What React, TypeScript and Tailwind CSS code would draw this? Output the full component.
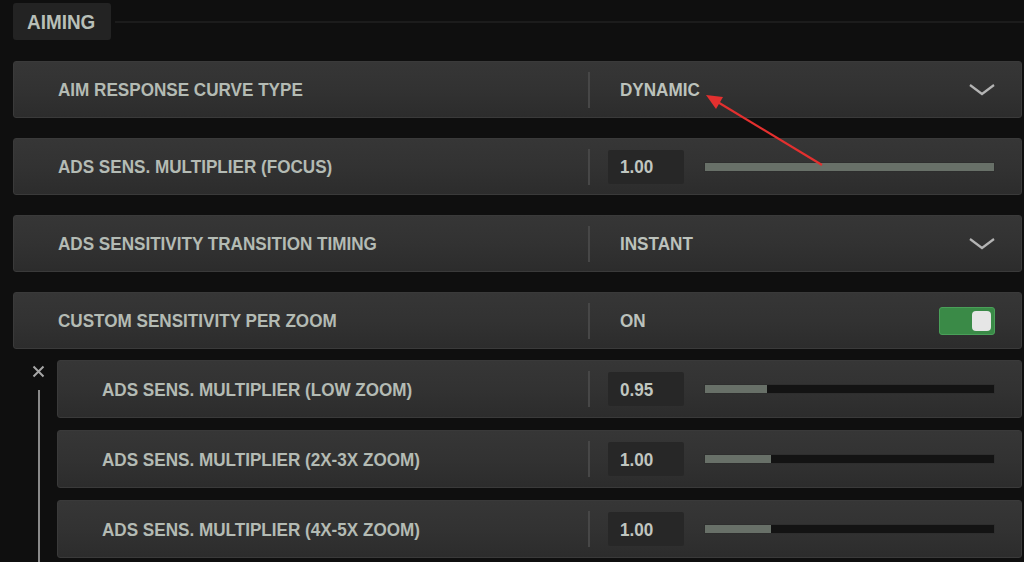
import React from "react";

type Kind = "dropdown" | "slider" | "toggle";

interface Setting {
  label: string;
  kind: Kind;
  value: string;
  fill?: number;
}

const mainRows: Setting[] = [
  { label: "AIM RESPONSE CURVE TYPE", kind: "dropdown", value: "DYNAMIC" },
  { label: "ADS SENS. MULTIPLIER (FOCUS)", kind: "slider", value: "1.00", fill: 100 },
  { label: "ADS SENSITIVITY TRANSITION TIMING", kind: "dropdown", value: "INSTANT" },
  { label: "CUSTOM SENSITIVITY PER ZOOM", kind: "toggle", value: "ON" },
];

const zoomRows: Setting[] = [
  { label: "ADS SENS. MULTIPLIER (LOW ZOOM)", kind: "slider", value: "0.95", fill: 21.5 },
  { label: "ADS SENS. MULTIPLIER (2X-3X ZOOM)", kind: "slider", value: "1.00", fill: 23 },
  { label: "ADS SENS. MULTIPLIER (4X-5X ZOOM)", kind: "slider", value: "1.00", fill: 23 },
];

function Txt({ children, className = "" }: { children: React.ReactNode; className?: string }) {
  return (
    <span className={`inline-block origin-left scale-x-[0.9] whitespace-nowrap ${className}`}>
      {children}
    </span>
  );
}

function Row({ s, tall }: { s: Setting; tall?: boolean }) {
  return (
    <div
      className={`flex items-center rounded-[3px] border border-[#3a3a3a] bg-linear-to-b from-[#363636] via-[#323232] to-[#2c2c2c] ${
        tall ? "h-[58px]" : "h-[57px]"
      }`}
    >
      <div className="flex-1 pl-[44px] text-[19px] leading-none text-[#b4bbb4]">
        <Txt>{s.label}</Txt>
      </div>
      <div className="h-[36px] w-[2px] bg-[#474747]" />
      <div className="flex h-full w-[431px] items-center pr-[26px]">
        {s.kind === "dropdown" && (
          <>
            <div className="flex-1 pl-[30px] text-[19px] leading-none text-[#bcc2bc]">
              <Txt>{s.value}</Txt>
            </div>
            <svg width="26" height="14" viewBox="0 0 26 14">
              <polyline points="1,2 13,11 25,2" fill="none" stroke="#b4b4b4" strokeWidth="2.2" />
            </svg>
          </>
        )}
        {s.kind === "toggle" && (
          <>
            <div className="flex-1 pl-[30px] text-[19px] leading-none text-[#bcc2bc]">
              <Txt>{s.value}</Txt>
            </div>
            <div className="flex h-[28px] w-[56px] items-center justify-end rounded-[3px] border border-[#4aa059] bg-[#3a8a47] pr-[3px]">
              <div className="h-[20px] w-[19px] rounded-[4px] bg-[#e6e6e6]" />
            </div>
          </>
        )}
        {s.kind === "slider" && (
          <>
            <div className="ml-[18px] flex h-[34px] w-[76px] items-center rounded-[2px] bg-[#272727] pl-[12px] text-[19px] leading-none text-[#c0c6c0]">
              <Txt>{s.value}</Txt>
            </div>
            <div className="ml-[20px] h-[10px] flex-1 border border-[#2e2e2e] bg-[#131313]">
              <div className="h-full bg-[#687068]" style={{ width: `${s.fill}%` }} />
            </div>
          </>
        )}
      </div>
    </div>
  );
}

export default function App() {
  return (
    <div className="relative h-[562px] w-[1024px] overflow-hidden bg-[#0f0f0f] font-['Liberation_Sans',sans-serif] font-bold">
      {/* Section tab */}
      <div className="flex items-center pl-[13px] pt-[3px]">
        <div className="flex h-[37px] w-[98px] items-center rounded-[3px] bg-[#232323] pl-[14px] text-[21px] leading-none text-[#b8bfb8]">
          <Txt>AIMING</Txt>
        </div>
        <div className="ml-[4px] h-[2px] flex-1 bg-[#1c1c1c]" />
      </div>

      <div className="mt-[21px] flex flex-col gap-[20px] pl-[13px] pr-[2px]">
        {mainRows.map((s) => (
          <Row key={s.label} s={s} />
        ))}
      </div>

      {/* Per-zoom sub settings */}
      <div className="mt-[11px] flex pl-[13px] pr-[2px]">
        <div className="flex w-[44px] flex-col items-center pl-[7px] pt-[5px]">
          <svg width="13" height="13" viewBox="0 0 13 13">
            <path d="M1.5 1.5 L11.5 11.5 M11.5 1.5 L1.5 11.5" stroke="#a6a6a6" strokeWidth="2" />
          </svg>
          <div className="mt-[12px] h-[200px] w-[2px] bg-[#8a8a8a]" />
        </div>
        <div className="flex flex-1 flex-col gap-[12px]">
          {zoomRows.map((s) => (
            <Row key={s.label} s={s} tall />
          ))}
        </div>
      </div>

      {/* Annotation arrow */}
      <svg className="pointer-events-none absolute left-0 top-0" width="1024" height="562">
        <line x1="822" y1="165" x2="716" y2="101" stroke="#e3302f" strokeWidth="2.2" />
        <polygon points="706,95 723,97 716,109" fill="#e3302f" />
      </svg>
    </div>
  );
}
